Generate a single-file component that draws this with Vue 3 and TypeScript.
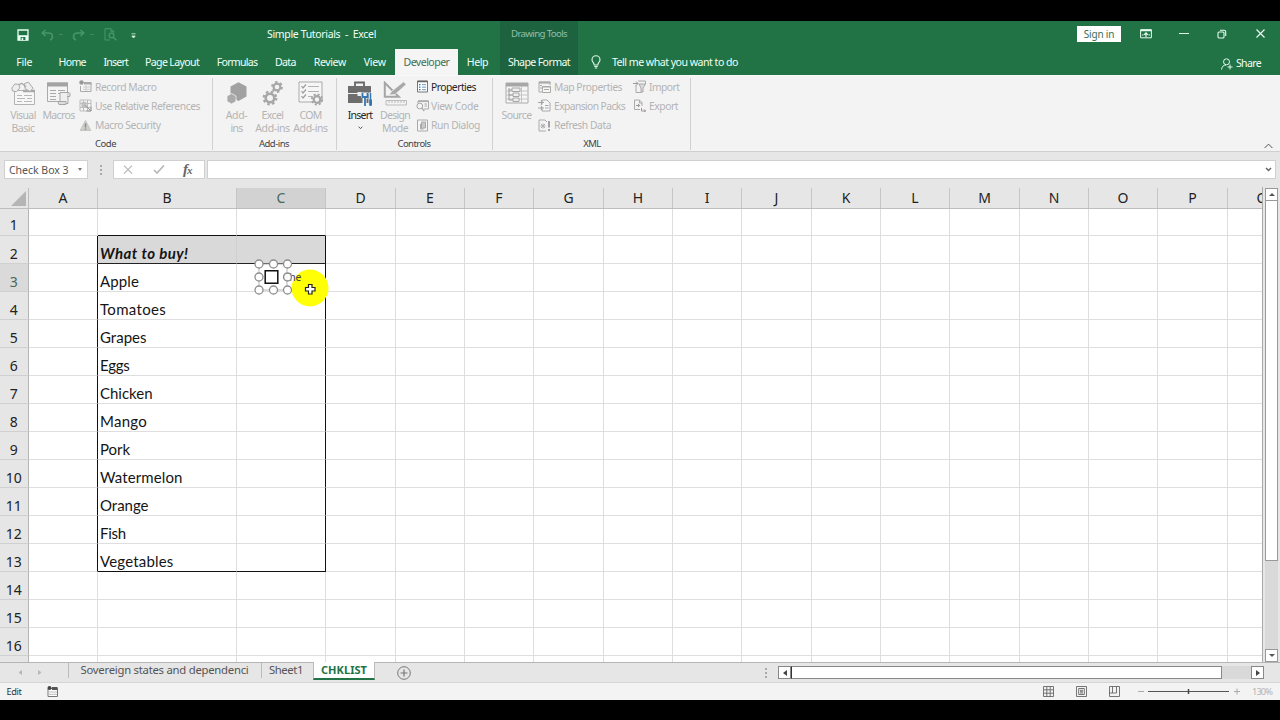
<script setup lang="ts">
import type { Directive } from 'vue'

interface Tab { name: string; cell: number; text: number; kind?: string }
interface Column { name: string; width: number }

// Spreads the letters of a label evenly over the given width.
const vFit: Directive<HTMLElement, number> = {
  mounted(el, { value }) {
    const natural = el.getBoundingClientRect().width
    const count = (el.textContent ?? '').trim().length
    if (count) el.style.letterSpacing = `${(value - natural) / count}px`
  },
}

const tabs: Tab[] = [
  { name: 'File', cell: 48.4, text: 16 },
  { name: 'Home', cell: 47.6, text: 27.5 },
  { name: 'Insert', cell: 39.6, text: 24.5 },
  { name: 'Page Layout', cell: 73, text: 54 },
  { name: 'Formulas', cell: 57, text: 40.5 },
  { name: 'Data', cell: 39.6, text: 21 },
  { name: 'Review', cell: 49.4, text: 32 },
  { name: 'View', cell: 40.4, text: 22 },
  { name: 'Developer', cell: 63, text: 46, kind: 'active' },
  { name: 'Help', cell: 42, text: 21.5, kind: 'help' },
  { name: 'Shape Format', cell: 78, text: 62, kind: 'context' },
]

const columns: Column[] = [
  { name: 'A', width: 69 }, { name: 'B', width: 139 }, { name: 'C', width: 89 },
  { name: 'D', width: 70 }, { name: 'E', width: 69 }, { name: 'F', width: 69 },
  { name: 'G', width: 70 }, { name: 'H', width: 69 }, { name: 'I', width: 69 },
  { name: 'J', width: 70 }, { name: 'K', width: 69 }, { name: 'L', width: 69 },
  { name: 'M', width: 70 }, { name: 'N', width: 69 }, { name: 'O', width: 69 },
  { name: 'P', width: 70 }, { name: 'Q', width: 69 },
]

const items: Record<number, [string, number]> = {
  2: ['What to buy!', 88.5], 3: ['Apple', 39], 4: ['Tomatoes', 66], 5: ['Grapes', 46.5],
  6: ['Eggs', 29.5], 7: ['Chicken', 52.5], 8: ['Mango', 47], 9: ['Pork', 30],
  10: ['Watermelon', 82.5], 11: ['Orange', 48.5], 12: ['Fish', 26], 13: ['Vegetables', 73.5],
}

function cellClass(row: number, col: string) {
  return {
    head: row === 2 && (col === 'B' || col === 'C'),
    last: row === 13 && (col === 'B' || col === 'C'),
    above: row === 1 && (col === 'B' || col === 'C'),
    edge: row >= 2 && row <= 13 && col === 'C',
    start: row >= 2 && row <= 13 && col === 'A',
  }
}
</script>

<template>
  <div class="screen">
    <div class="window">
      <header class="top">
        <div class="titlebar">
          <div class="quick">
            <svg class="save" width="12" height="12" viewBox="0 0 12 12"><path d="M1 1h10v10H1z" fill="none" stroke="#e9fff2" stroke-width="1.3" /><path d="M1 6.2h10v5H1z" fill="#e9fff2" /><path d="M3.6 8h4.8v3H3.6z" fill="#217346" /><path d="M4.6 8.8h1.6v2.4H4.6z" fill="#e9fff2" /></svg>
            <svg class="undo" width="13" height="12" viewBox="0 0 13 12"><path d="M4.5 1 1.3 4l3.2 3M1.5 4h6c5 0 5 6 1.5 7" fill="none" stroke="#4a946b" stroke-width="1.6" /></svg>
            <i class="dash"></i>
            <svg class="redo" width="13" height="12" viewBox="0 0 13 12"><path d="M8.5 1l3.2 3-3.2 3M11.5 4h-6c-5 0-5 6-1.5 7" fill="none" stroke="#4a946b" stroke-width="1.6" /></svg>
            <i class="dash"></i>
            <svg class="preview" width="13" height="13" viewBox="0 0 13 13"><path d="M6 12H1V.7h6l3 3v1M7 .7v3h3" fill="none" stroke="#4a946b" /><circle cx="7.5" cy="7.5" r="2.4" fill="none" stroke="#4a946b" stroke-width="1.3" /><path d="m9.3 9.3 3 3" stroke="#4a946b" stroke-width="1.5" /></svg>
            <svg class="custom" width="5" height="6" viewBox="0 0 5 6"><path d="M.5.8h4M.8 3h3.4L2.5 5z" stroke="#d6f2e2" fill="#d6f2e2" stroke-width=".8" /></svg>
          </div>
          <div class="doc"><span v-fit="109">Simple Tutorials&nbsp; -&nbsp; Excel</span></div>
          <div class="tools"><span v-fit="56">Drawing Tools</span></div>
          <div class="sys">
            <div class="signin"><span v-fit="30.5">Sign in</span></div>
            <svg class="ribbonopt" width="12" height="10" viewBox="0 0 12 10"><path d="M.6.6h10.8v8.2H.6z" fill="none" stroke="#e4faed" /><path d="M1 1.5h10" stroke="#e4faed" stroke-width="1.5" /><path d="M6 8V4M4 5.8 6 3.8l2 2M2 6h1.4M8.6 6H10" fill="none" stroke="#e4faed" stroke-width="1.2" /></svg>
            <i class="min"></i>
            <svg class="restore" width="10" height="10" viewBox="0 0 10 10"><rect x="1" y="3" width="6" height="6" rx="1" fill="none" stroke="#e4faed" stroke-width="1.1" /><path d="M3 1.3h4.2q1.5 0 1.5 1.5V7" fill="none" stroke="#e4faed" stroke-width="1.1" /></svg>
            <svg class="close" width="9" height="9" viewBox="0 0 9 9"><path d="m.5.5 8 8m0-8-8 8" stroke="#effff5" stroke-width="1.1" /></svg>
          </div>
        </div>
        <nav class="tabs">
          <div v-for="t in tabs" :key="t.name" class="tab" :class="t.kind" :style="{ width: t.cell + 'px' }"><span v-fit="t.text">{{ t.name }}</span></div>
          <svg class="bulb" width="10" height="14" viewBox="0 0 10 14"><path d="M3.2 10C3.2 7.6 1 7.2 1 4.7a4 4 0 0 1 8 0C9 7.2 6.8 7.6 6.8 10zM3.3 11.5h3.4M3.8 13h2.4" fill="none" stroke="#dff7e9" stroke-width="1.1" /></svg>
          <span v-fit="126" class="tell">Tell me what you want to do</span>
          <div class="share">
            <svg width="12" height="12" viewBox="0 0 12 12"><circle cx="5.5" cy="3.8" r="3" fill="none" stroke="#e4faed" /><path d="M.6 11.5C.8 8.6 2.5 7 5 7M9 6.5v5M6.5 9h5" fill="none" stroke="#e4faed" /></svg>
            <span v-fit="25">Share</span>
          </div>
        </nav>
      </header>

      <section class="ribbon">
        <div class="group code">
          <div class="tools-row">
            <div class="big vb">
              <svg width="24" height="24" viewBox="0 0 24 24"><path d="M3.5 9v14h20V9z" fill="#f7f7f7" stroke="#b3b3b3" /><path d="M12 9.500h12" stroke="#a8a8a8" stroke-width="2.500" /><path d="M6 14h5m2 0h8M6 17h8m2 0h5M6 20h5m2 0h8" stroke="#b9b9b9" /><path d="m.8 6.500 3-4 4 .3 1 3.600-3.300 3.800-4-.7z" fill="#eee" stroke="#aaa" /><path d="m13.500 2 4-1.300 4.500 6-3 3.300-5-3z" fill="#eee" stroke="#aaa" /><path d="M8 3.500c3-3 4-.8 7 2" fill="none" stroke="#aaa" stroke-width="1.400" /></svg>
              <span v-fit="25.5">Visual</span><span v-fit="23">Basic</span>
            </div>
            <div class="big macros">
              <svg width="25" height="24" viewBox="0 0 25 24"><path d="M1.5 1.5h20V20h-20z" fill="#f4f4f4" stroke="#aaa" /><path d="M1 1h21v4H1z" fill="#a3a3a3" /><path d="M4 9h6m2 0h7M4 12h6m2 0h3M4 15h6M4 18h6" stroke="#aaa" /><path d="M14 11h8v11h-8z" fill="#eee" stroke="#a6a6a6" /><path d="M12 20h8v3h-7zM22 11q3 0 1.8 4H21" fill="#ddd" stroke="#a6a6a6" /></svg>
              <span v-fit="32">Macros</span>
            </div>
            <div class="list">
              <div class="small"><svg width="13" height="13" viewBox="0 0 13 13"><path d="M3.5 2.5H12v9H1.5V6" fill="#f4f4f4" stroke="#aaa" /><path d="M5 2.5h7.5v2H5z" fill="#aaa" /><circle cx="2.5" cy="2.5" r="2.2" fill="#999" /><path d="M4 7h7M4 9.3h7M7 5v6" stroke="#ccc" /></svg><span v-fit="61.5">Record Macro</span></div>
              <div class="small"><svg width="13" height="13" viewBox="0 0 13 13"><path d="M1 1h11v11H1zM1 4.5h11M1 8.5h11M4.5 1v11M8.5 1v11" fill="none" stroke="#bdbdbd" /><path d="M2.5 3h5v5h-5z" fill="#c0c0c0" /><path d="m6 6 6 6M12 7.5V12H7.5" stroke="#999" fill="none" /></svg><span v-fit="105">Use Relative References</span></div>
              <div class="small"><svg width="13" height="13" viewBox="0 0 13 13"><path d="m6.5 1.5 5.3 10H1.2z" fill="#cfcdc7" stroke="#c4c4c4" stroke-linejoin="round" /><path d="M6.5 4.5v4M6.5 9.5v1.3" stroke="#888" stroke-width="1.4" /></svg><span v-fit="65.5">Macro Security</span></div>
            </div>
          </div>
          <div class="label"><span v-fit="21">Code</span></div>
        </div>

        <div class="group addins">
          <div class="tools-row">
            <div class="big w35">
              <svg width="22" height="24" viewBox="0 0 22 24"><path d="m12.5.8 8 4.2v10l-8 4.5-8-4.5V5z" fill="#a1a1a1" /><path d="m5.5 12 4.5 2.5V20l-4.5 2.5L1 20v-5.5z" fill="#aaa" stroke="#f3f3f3" stroke-width=".8" /></svg>
              <span v-fit="21.5">Add-</span><span v-fit="12">ins</span>
            </div>
            <div class="big w37">
              <svg width="22" height="25" viewBox="0 0 22 25"><circle cx="15" cy="6" r="3.4" fill="none" stroke="#a7a7a7" stroke-width="2.2" /><circle cx="15" cy="6" r="5" fill="none" stroke="#a7a7a7" stroke-width="1.8" stroke-dasharray="2.4 2.83" /><circle cx="8" cy="17" r="4.300" fill="none" stroke="#a7a7a7" stroke-width="2.600" /><circle cx="8" cy="17" r="6.300" fill="none" stroke="#a7a7a7" stroke-width="2.200" stroke-dasharray="2.500 2.450" /></svg>
              <span v-fit="22">Excel</span><span v-fit="34.5">Add-ins</span>
            </div>
            <div class="big w39">
              <svg width="26" height="25" viewBox="0 0 26 25"><path d="M1 1h23v20H1z" fill="#f6f6f6" stroke="#aaa" /><path d="M10 5.5h11M10 10.5h11M10 15.5h5" stroke="#b3b3b3" stroke-width="1.2" /><path d="m3.5 5 1.5 2 3-3.5M3.5 10l1.5 2 3-3.5M3.5 15 5 17l3-3.5" fill="none" stroke="#9d9d9d" stroke-width="1.2" /><circle cx="19" cy="18.5" r="3.3" fill="#f4f4f4" stroke="#a5a5a5" stroke-width="2.2" /><circle cx="19" cy="18.5" r="5.1" fill="none" stroke="#a5a5a5" stroke-width="2" stroke-dasharray="2 2" /></svg>
              <span v-fit="22">COM</span><span v-fit="34.5">Add-ins</span>
            </div>
          </div>
          <div class="label"><span v-fit="30">Add-ins</span></div>
        </div>

        <div class="group controls">
          <div class="tools-row">
            <div class="big w34 on">
              <svg width="26" height="25" viewBox="0 0 26 25"><path d="M8 5V1.5h9V5" fill="none" stroke="#666" stroke-width="1.8" /><path d="M1 5h23v7H1zM1 13h23v9H1z" fill="#6d6d6d" /><path d="M10.5 11h4v4h-4z" fill="#eee" /><path d="M14.500 11.500h6.500v6h-1.500V25h-4v-8h-1.500zM21.500 11.500h4.500V25h-4.500z" fill="#f4f4f4" /><path d="M15.500 12v4h5v-4M18 15.500V25" fill="none" stroke="#3477b5" stroke-width="1.800" /><path d="M23.500 12v7m0 0v6" stroke="#3477b5" stroke-width="1.500" /><path d="M22.200 18.500h2.800v6h-2.800z" fill="#3477b5" /></svg>
              <span v-fit="24.5">Insert</span>
              <svg class="drop" width="5" height="4" viewBox="0 0 5 4"><path d="M.7.700 2.500 2.700 4.300.700" fill="none" stroke="#555" /></svg>
            </div>
            <div class="big w36">
              <svg width="25" height="25" viewBox="0 0 25 25"><path d="M1.800 1.800v14h14z" fill="none" stroke="#a6a6a6" stroke-width="2" /><path d="M6 14l3-4L20.500.800l2.700 2.700L12 13.500z" fill="#a8a8a8" stroke="#f3f3f3" stroke-width=".7" /><path d="M3 19.500h20.500v4.500H3zM6 20v2m3-2v2m3-2v2m3-2v2m3-2v2m3-2v2" fill="none" stroke="#b5b5b5" stroke-width=".9" /></svg>
              <span v-fit="30">Design</span><span v-fit="26">Mode</span>
            </div>
            <div class="list">
              <div class="small on"><svg width="12" height="13" viewBox="0 0 12 13"><path d="M1 1h10v11H1z" fill="#fff" stroke="#777" /><path d="M1 1.500h10" stroke="#666" stroke-width="1.500" /><path d="M2.500 4.700h1.500M2.500 7.200h1.500M2.500 9.700h1.500" stroke="#3477b5" stroke-width="1.300" /><path d="M5.500 4.700H9.500M5.500 7.200H9.500M5.500 9.700H9.500" stroke="#6f98bd" /></svg><span v-fit="45">Properties</span></div>
              <div class="small"><svg width="13" height="13" viewBox="0 0 13 13"><path d="M2 4V2h10.500v8H8" fill="none" stroke="#aaa" /><path d="M2 2.200h10.500" stroke="#aaa" stroke-width="1.500" /><circle cx="3.800" cy="7" r="2.900" fill="#f4f4f4" stroke="#a5a5a5" /><path d="m5.800 9 2.500 3M8.500 5h2.500M8.500 7h2.500" stroke="#aaa" stroke-width="1.200" /></svg><span v-fit="47.500">View Code</span></div>
              <div class="small"><svg width="12" height="13" viewBox="0 0 12 13"><path d="M1 1h10v11H1z" fill="#f5f5f5" stroke="#aaa" /><path d="M5 3h4v6H5zM4 5v5h3" fill="#c8c8c8" stroke="#aaa" /></svg><span v-fit="49">Run Dialog</span></div>
            </div>
          </div>
          <div class="label"><span v-fit="33">Controls</span></div>
        </div>

        <div class="group xml">
          <div class="tools-row">
            <div class="big w33">
              <svg width="24" height="23" viewBox="0 0 24 23"><path d="M1 1h22v20H1z" fill="#f5f5f5" stroke="#aaa" /><path d="M1 1h22v3.500H1z" fill="#a7a7a7" /><path d="M16.500 4v17M1 9h22M1 13h22M1 17h22" stroke="#c4c4c4" /><path d="M4 6v12h4M4 8h4M4 13h4" fill="none" stroke="#999" /><path d="M7 6h8v3.500H7zM8 11h6v3.500H8zM8 16h6v3.500H8z" fill="#eee" stroke="#a6a6a6" /></svg>
              <span v-fit="30">Source</span>
            </div>
            <div class="list first">
              <div class="small"><svg width="13" height="12" viewBox="0 0 13 12"><path d="M4 11H1V1h11v3" fill="none" stroke="#aaa" /><path d="M1 1.600h11.500" stroke="#aaa" stroke-width="2" /><path d="M4.500 5.500h8v6h-8z" fill="#f6f6f6" stroke="#aaa" /><path d="M4.500 6h8M6 8.500h5M2 4.500h2M2 7h2" stroke="#aaa" stroke-width="1.200" /></svg><span v-fit="68">Map Properties</span></div>
              <div class="small"><svg width="13" height="13" viewBox="0 0 13 13"><path d="M4 5V1h5l3 3v8H4V9" fill="#f6f6f6" stroke="#aaa" /><path d="M0 3.500h6M3.500 1v5M0 9h6M3.500 7v4M7 6.500h3.500M7 9h3.500" stroke="#a5a5a5" stroke-width="1.200" /></svg><span v-fit="71">Expansion Packs</span></div>
              <div class="small"><svg width="13" height="13" viewBox="0 0 13 13"><path d="M8 12H1V1h6l2 2" fill="none" stroke="#aaa" /><path d="M2.500 7h5M5 4.500v5M3 5l4 4M7 5 3 9" stroke="#b0b0b0" /><path d="M11 2v6.500M11 10v2" stroke="#999" stroke-width="1.800" /></svg><span v-fit="57">Refresh Data</span></div>
            </div>
            <div class="list second">
              <div class="small"><svg width="13" height="13" viewBox="0 0 13 13"><path d="M8.500 12.500H3V5M5 1h7.500v3" fill="none" stroke="#aaa" /><path d="M0 3.500h5M3 1.500l2 2-2 2" fill="none" stroke="#999" /><path d="M6 4h6.500L10 8v4H8V8z" fill="#ddd" stroke="#aaa" /></svg><span v-fit="30.500">Import</span></div>
              <div class="small"><svg width="13" height="13" viewBox="0 0 13 13"><path d="M7 10.500H1.500V1h5l2.500 2.500V7M6.500 1v3H9" fill="none" stroke="#aaa" /><path d="M3 6.500h3.500M5 5l1.800 1.500L5 8M8.500 9v3h4M11 10.300l1.700 1.700-1.700 1" fill="none" stroke="#999" /></svg><span v-fit="29">Export</span></div>
            </div>
          </div>
          <div class="label"><span v-fit="17.500">XML</span></div>
        </div>
        <svg class="collapse" width="9" height="6" viewBox="0 0 9 6"><path d="m.6 5 3.900-3.900L8.400 5" fill="none" stroke="#555" /></svg>
      </section>

      <section class="formula">
        <div class="namebox"><span v-fit="59.500">Check Box 3</span><i class="caret"></i></div>
        <div class="dots"><i></i><i></i><i></i></div>
        <div class="fx">
          <svg width="10" height="9" viewBox="0 0 10 9"><path d="m1 .6 8 8M9 .6l-8 8" stroke="#b8b8b8" stroke-width="1.200" /></svg>
          <svg width="12" height="9" viewBox="0 0 12 9"><path d="m1 5 3 3 7-7.500" fill="none" stroke="#b8b8b8" stroke-width="1.700" /></svg>
          <b class="func">f<small>x</small></b>
        </div>
        <div class="entry"><svg width="7" height="5" viewBox="0 0 7 5"><path d="m1 1 2.500 2.500L6 1" fill="none" stroke="#666" stroke-width="1.500" /></svg></div>
      </section>

      <section class="sheet">
        <div class="grid">
          <div class="row header">
            <div class="corner"><svg width="15" height="15" viewBox="0 0 15 15"><path d="M15 0v15H0z" fill="#b5b5b5" /></svg></div>
            <div v-for="c in columns" :key="c.name" class="colhead" :class="{ chosen: c.name === 'C' }" :style="{ width: c.width + 'px' }">{{ c.name }}</div>
          </div>
          <div v-for="r in 17" :key="r" class="row" :class="{ one: r === 1 }">
            <div class="rownum" :class="{ chosen: r === 3 }">{{ r < 17 ? r : '' }}</div>
            <div v-for="c in columns" :key="c.name" class="cell" :class="cellClass(r, c.name)" :style="{ width: c.width + 'px' }">
              <span v-if="c.name === 'B' && items[r]" v-fit="items[r][1]">{{ items[r][0] }}</span>
            </div>
          </div>
          <svg class="shape" width="80" height="54" viewBox="0 0 80 54">
            <circle cx="60" cy="31" r="18.500" fill="#ffff05" />
            <path d="M9 7h28v26H9z" fill="none" stroke="#b6b6b6" />
            <path d="M15.200 13.700h12.600v12.600H15.200z" fill="#fff" stroke="#111" stroke-width="1.500" />
            <text x="33" y="24" textLength="18.500" class="che">Che</text>
            <g fill="#fff" stroke="#8e8e8e" stroke-width="1.300"><circle cx="9" cy="7" r="4" /><circle cx="23.500" cy="7" r="4" /><circle cx="37.500" cy="7" r="4" /><circle cx="9" cy="20" r="4" /><circle cx="37.500" cy="20" r="4" fill-opacity=".8" /><circle cx="9" cy="33" r="4" /><circle cx="23.500" cy="33" r="4" /><circle cx="37.500" cy="33" r="4" /></g>
            <path d="M58.500 27.500h3.500v3h3v3.500h-3v3h-3.500v-3h-3v-3.500h3z" fill="#fff" stroke="#222" stroke-width="1.200" />
          </svg>
        </div>
        <div class="vscroll">
          <div class="sbtn"><i class="up"></i></div>
          <div class="thumb"></div>
          <div class="track"></div>
          <div class="sbtn"><i class="down"></i></div>
        </div>
      </section>

      <section class="sheets">
        <i class="prev"></i><i class="next"></i>
        <div class="sheettab first"><span v-fit="168">Sovereign states and dependenci</span></div>
        <div class="sheettab second"><span v-fit="34">Sheet1</span></div>
        <div class="sheettab current"><span v-fit="46">CHKLIST</span></div>
        <svg class="add" width="14" height="14" viewBox="0 0 14 14"><circle cx="7" cy="7" r="6.300" fill="none" stroke="#777" /><path d="M7 3.500v7M3.500 7h7" stroke="#777" stroke-width="1.200" /></svg>
        <div class="dots"><i></i><i></i><i></i></div>
        <div class="hscroll">
          <div class="hbtn"><i class="left"></i></div>
          <div class="hthumb"></div>
          <div class="htrack"></div>
          <div class="hbtn"><i class="right"></i></div>
        </div>
      </section>

      <footer class="status">
        <span v-fit="15" class="edit">Edit</span>
        <svg class="rec" width="11" height="11" viewBox="0 0 11 11"><path d="M1 2.500h9.500v8H1z" fill="#fff" stroke="#777" /><path d="M5 1h5.500v3H5z" fill="#555" /><circle cx="2.500" cy="2" r="2" fill="#444" /><path d="M2.500 6h7M2.500 8.300h7" stroke="#777" stroke-dasharray="1 1" /></svg>
        <svg class="v1" width="11" height="11" viewBox="0 0 11 11"><path d="M.5.5h10v10H.5zM.5 3.800h10M.5 7.200h10M3.800.5v10M7.200.5v10" fill="none" stroke="#666" stroke-width=".9" /></svg>
        <svg class="v2" width="11" height="11" viewBox="0 0 11 11"><path d="M.5.500h10v10H.5zM2.700 2.500h5.600v6H2.700zM4 4.300h3M4 5.700h3M4 7h3" fill="none" stroke="#666" stroke-width=".9" /></svg>
        <svg class="v3" width="11" height="11" viewBox="0 0 11 11"><path d="M.5.500h10v10H.5zM3.500.500V7h4V.500M.5 7h3" fill="none" stroke="#666" stroke-width=".9" /></svg>
        <svg class="zoom" width="103" height="9" viewBox="0 0 103 9"><path d="M0 4.500h6M96 4.500h6M99 1.500v6" stroke="#aaa" /><path d="M10 4.500h81" stroke="#555" /><path d="M50.500 2v5" stroke="#444" stroke-width="1.500" /></svg>
        <span v-fit="20" class="pct">130%</span>
      </footer>
    </div>
  </div>
</template>

<style>
body { background: #000; overflow: hidden; }
</style>

<style scoped>
* { box-sizing: border-box; }
svg { display: block; flex: none; }
span { white-space: nowrap; flex: none; }
.screen { width: 1280px; height: 720px; padding: 21px 0 20px; background: #000; overflow: hidden; font-family: "Noto Sans", "Open Sans", sans-serif; font-size: 11px; color: #333; }
.window { height: 679px; display: flex; flex-direction: column; background: #e6e6e6; }

.top { height: 54px; flex: none; background: #217346; color: #f0fff6; }
.titlebar { height: 28px; display: flex; align-items: stretch; font-size: 10.5px; }
.quick { display: flex; align-items: center; width: 267px; padding: 0 0 1px 17px; }
.undo { margin-left: 12px; }
.dash { width: 4px; height: 1px; background: #3c8860; margin-left: 5px; }
.redo { margin-left: 9px; }
.preview { margin-left: 10px; }
.custom { margin: 2px 0 0 14px; }
.doc { width: 233px; line-height: 26px; }
.tools { width: 78px; background: #1e6340; color: #92bea4; text-align: center; line-height: 26px; font-size: 9.7px; }
.sys { display: flex; align-items: center; margin-left: 499px; padding-bottom: 3px; }
.signin { width: 44px; height: 16px; background: #fff; color: #3b6e53; text-align: center; line-height: 16px; font-size: 10px; }
.ribbonopt { margin-left: 19px; }
.min { width: 10px; height: 1px; background: #e4faed; margin-left: 27px; }
.restore { margin-left: 28px; }
.close { margin-left: 29px; }
.tabs { height: 26px; display: flex; align-items: stretch; line-height: 26px; font-size: 10.6px; }
.tab { text-align: center; flex: none; }
.help { padding-right: 3px; }
.active { background: #f5f5f5; color: #3c7156; }
.context { background: #1e6340; }
.bulb { margin: 6px 0 0 13px; }
.tell { margin-left: 11px; }
.share { display: flex; align-items: center; margin-left: auto; padding: 3px 19px 0 0; gap: 3px; font-size: 10.5px; line-height: 23px; }

.ribbon { height: 76px; flex: none; display: flex; background: #f3f3f3; position: relative; border-top: 1px solid #f9f9f9; }
.group { height: 72px; margin-top: 2px; border-right: 1px solid #d0d0d0; display: flex; flex-direction: column; }
.code { width: 213px; padding-left: 4px; }
.addins { width: 124px; padding-left: 6px; }
.controls { width: 156px; padding-left: 6px; }
.xml { width: 198px; padding-left: 7px; }
.tools-row { display: flex; height: 60px; }
.big { display: flex; flex-direction: column; align-items: center; padding-top: 3px; color: #b3b3b3; font-size: 10.5px; line-height: 13.3px; }
.big > svg:first-child { height: 25px; margin-bottom: 3px; }
.big .drop { margin-top: 4px; }
.vb { width: 38px; }
.macros { width: 35px; padding-right: 2px; }
.w33 { width: 33px; } .w34 { width: 34px; } .w35 { width: 35px; } .w36 { width: 36px; } .w37 { width: 37px; } .w39 { width: 39px; }
.list { padding-left: 2px; margin-top: -1px; }
.controls .list { padding-left: 3px; }
.xml .first { padding-left: 5px; width: 100px; }
.xml .second { padding-left: 0; }
.small { display: flex; align-items: center; gap: 3px; height: 19.3px; font-size: 10.3px; line-height: 18px; color: #b3b3b3; }
.controls .small { gap: 2px; }
.small svg { width: 13px; }
.on { color: #262626; }
.label { height: 12px; line-height: 12px; text-align: center; font-size: 9.5px; color: #444; padding-right: 5px; }
.addins .label, .controls .label { padding-right: 7px; }
.xml .label { padding-right: 6px; }
.collapse { position: absolute; right: 7px; bottom: 2px; }

.formula { height: 36px; flex: none; border-top: 1px solid #cfcfcf; display: flex; padding: 8px 4px 8px; background: #e6e6e6; }
.namebox { width: 84px; height: 19px; background: #fff; border: 1px solid #d0d0d0; display: flex; align-items: center; padding-left: 4px; font-size: 10.5px; color: #555; }
.caret { margin-left: 9px; border: 2.5px solid transparent; border-top: 3px solid #777; border-bottom: 0; }
.dots { display: flex; flex-direction: column; gap: 2px; padding: 5px 12px 0; width: 25px; }
.dots i { width: 2px; height: 2px; background: #aaa; }
.fx { width: 92px; height: 19px; background: #fff; border: 1px solid #d0d0d0; display: flex; align-items: center; padding-left: 9px; gap: 20px; }
.func { font: italic bold 15px/17px "Liberation Serif", serif; color: #666; margin-left: -2px; }
.func small { font-size: 11px; margin-left: -1px; }
.entry { flex: 1; height: 19px; margin-left: 2px; background: #fff; border: 1px solid #d0d0d0; display: flex; align-items: center; justify-content: flex-end; padding-right: 3px; }

.sheet { height: 475px; flex: none; display: flex; overflow: hidden; }
.grid { width: 1263px; position: relative; overflow: hidden; background: #fff; border-right: 1px solid #aaa; }
.row { display: flex; height: 28px; width: 1300px; }
.one { height: 27px; }
.header { height: 22px; background: #e6e6e6; border-bottom: 1px solid #bdbdbd; padding-top: 1px; }
.corner { width: 28.5px; flex: none; padding: 3px 0 0 11px; border-right: 1px solid #bdbdbd; }
.colhead { flex: none; border-right: 1px solid #c6c6c6; text-align: center; font-size: 14px; line-height: 20px; color: #222; padding-left: 1px; }
.colhead.chosen { background: #d2d2d2; color: #45695a; }
.rownum { width: 28.5px; flex: none; background: #e6e6e6; border-right: 1px solid #b5b5b5; border-bottom: 1px solid #d0d0d0; text-align: center; font-size: 14px; line-height: 35px; color: #222; }
.rownum.chosen { background: #dadada; color: #45695a; }
.one .rownum { line-height: 32px; }
.cell { flex: none; border-right: 1px solid #dedede; border-bottom: 1px solid #dedede; padding-left: 2.5px; font-family: Lato, sans-serif; font-size: 15px; line-height: 35px; color: #151515; }
.start { border-right: 1px solid #111; }
.edge { border-right: 1px solid #111; }
.above { border-bottom-color: #111; }
.head { background: #d9d9d9; border-bottom: 1px solid #222; font-weight: bold; font-style: italic; }
.head:not(.edge) { border-right-color: #d0d0d0; }
.last { border-bottom-color: #111; }
.shape { position: absolute; left: 249.5px; top: 70px; }
.che { font-family: "Noto Sans", sans-serif; font-size: 10.5px; fill: #444; }
.vscroll { width: 17px; display: flex; flex-direction: column; padding: 1px 2px 0; background: #e6e6e6; }
.sbtn { height: 13px; flex: none; background: #fff; border: 1px solid #999; display: flex; align-items: center; justify-content: center; }
.thumb { height: 360px; flex: none; background: #fff; border: 1px solid #999; border-top: 0; }
.track { flex: 1; background: #d9d9d9; }
.up { border: 3px solid transparent; border-top: 0; border-bottom: 3px solid #555; }
.down { border: 3px solid transparent; border-bottom: 0; border-top: 3px solid #555; }
.left { border: 3px solid transparent; border-left: 0; border-right: 4px solid #444; }
.right { border: 3px solid transparent; border-right: 0; border-left: 4px solid #444; }

.sheets { height: 20px; flex: none; display: flex; background: #e6e6e6; border-top: 1px solid #b5b5b5; font-size: 11.3px; line-height: 14px; color: #555; }
.prev { margin: 7px 0 0 19px; height: 5px; border: 2.5px solid transparent; border-left: 0; border-right: 3px solid #b8b8b8; }
.next { margin: 7px 0 0 16px; height: 5px; border: 2.5px solid transparent; border-right: 0; border-left: 3px solid #b8b8b8; }
.sheettab { border-left: 1px solid #bbb; height: 15px; }
.sheettab.first { margin-left: 27px; width: 193px; padding-left: 11.5px; }
.sheettab.second { width: 52px; padding-left: 7px; }
.sheettab.current { margin-top: -1px; width: 62px; height: 18px; line-height: 16px; background: #fff; color: #217346; font-weight: bold; text-align: center; border-bottom: 2px solid #217346; border-right: 1px solid #bbb; font-size: 11px; }
.add { margin: 3px 0 0 22px; }
.sheets .dots { width: 26px; padding-left: 13px; margin-left: 341px; }
.hscroll { width: 486px; height: 13px; margin: 3px 0 0; display: flex; }
.hbtn { width: 13px; flex: none; background: #fff; border: 1px solid #888; display: flex; align-items: center; justify-content: center; }
.hthumb { width: 431px; background: #fff; border: 1px solid #888; border-left-color: #333; }
.htrack { flex: 1; background: #d9d9d9; }

.status { flex: 1; display: flex; align-items: center; background: #f3f3f3; border-top: 1px solid #d5d5d5; font-size: 9.3px; }
.edit { margin-left: 6.5px; }
.rec { margin-left: 25.5px; }
.v1 { margin-left: 985px; }
.v2 { margin-left: 22px; }
.v3 { margin-left: 22px; }
.zoom { margin-left: 18px; }
.pct { margin-left: 11px; color: #b3b3b3; }
</style>
